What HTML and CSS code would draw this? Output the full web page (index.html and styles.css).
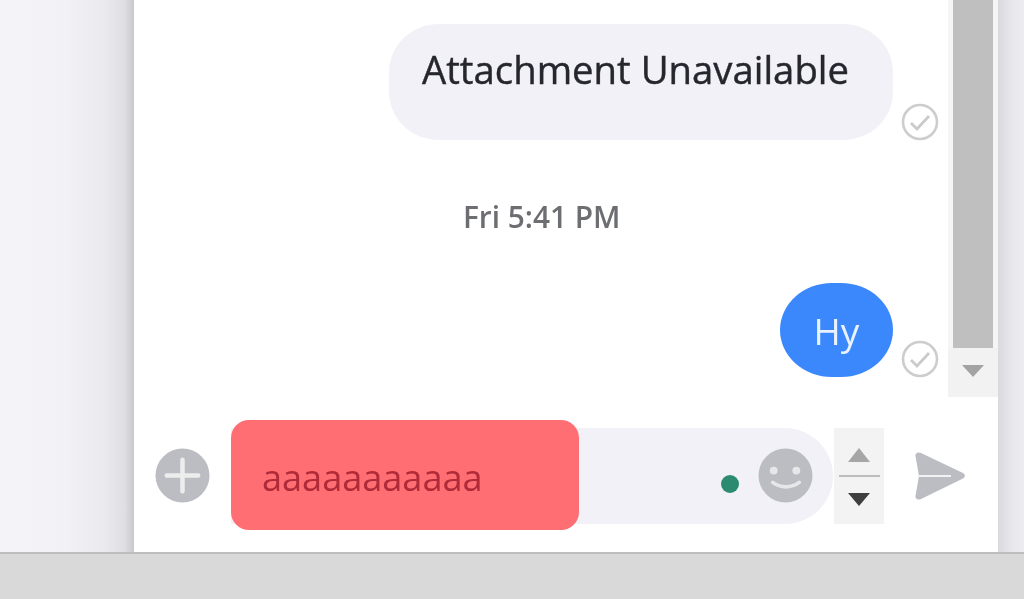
FILE: index.html
```html
<!DOCTYPE html>
<html lang="en">
<head>
<meta charset="utf-8">
<title>Messenger chat</title>
<link rel="stylesheet" href="styles.css">
</head>
<body>
<div class="desktop">
  <div class="side side-left"></div>
  <main class="panel">
    <div class="thread">
      <div class="messages">
        <div class="row">
          <div class="bubble bubble-grey">Attachment Unavailable</div>
          <svg class="tick" viewBox="0 0 38 38"><circle cx="19" cy="19" r="17" fill="none" stroke="#cdcdcd" stroke-width="2.6"/><path d="M10 20l6 6 12-13" fill="none" stroke="#cacaca" stroke-width="2.8"/></svg>
        </div>
        <div class="stamp">Fri 5:41 PM</div>
        <div class="row">
          <div class="bubble bubble-blue">Hy</div>
          <svg class="tick" viewBox="0 0 38 38"><circle cx="19" cy="19" r="17" fill="none" stroke="#cdcdcd" stroke-width="2.6"/><path d="M10 20l6 6 12-13" fill="none" stroke="#cacaca" stroke-width="2.8"/></svg>
        </div>
      </div>
      <div class="scrollbar">
        <div class="thumb"></div>
        <div class="scroll-end"><span class="tri tri-scroll"></span></div>
      </div>
    </div>
    <div class="composer">
      <svg class="plus" viewBox="0 0 56 56"><circle cx="28" cy="28" r="27.5" fill="#bcbdc2"/><path d="M12 28h32M28 12v32" stroke="#eceded" stroke-width="4.6" stroke-linecap="round"/></svg>
      <div class="input">
        <div class="redact">aaaaaaaaaaa</div>
        <span class="dot"></span>
        <svg class="smile" viewBox="0 0 56 56"><circle cx="28" cy="28" r="27.5" fill="#bcbdc2"/><circle cx="16" cy="23" r="4" fill="#e6e7e9"/><circle cx="39" cy="23" r="4" fill="#e6e7e9"/><path d="M15 35c8 6 19 6 27 0" fill="none" stroke="#e6e7e9" stroke-width="3.8" stroke-linecap="round"/></svg>
      </div>
      <div class="spinner">
        <span class="tri tri-up"></span>
        <span class="rule"></span>
        <span class="tri tri-down"></span>
      </div>
      <svg class="send" viewBox="0 0 54 50"><path d="M2.500 5C2 2 5 .5 8 2l42 20c2.500 1.500 2.500 4 0 5.500L8 48c-3 1.500-6 0-5.500-3L6 25z" fill="#bcbdc2"/><path d="M5 25h33" stroke="#f1f2f4" stroke-width="2.200"/></svg>
    </div>
  </main>
  <div class="side side-right"></div>
</div>
<footer class="bar"></footer>
</body>
</html>
```

FILE: styles.css
```css
* { box-sizing: border-box; }
html, body { margin: 0; height: 100%; overflow: hidden; background: #fff; }
body { display: flex; flex-direction: column; width: 1024px; height: 599px; font-family: "Open Sans", "Noto Sans", sans-serif; filter: blur(0.45px); }
.desktop { display: flex; height: 552px; }
.side { flex: none; }
.side-left { width: 134px; background: linear-gradient(90deg, #f3f3f8 0%, #f1f1f6 50%, #e9e9ee 78%, #dfdfe3 93%, #c9c9cc 100%); }
.side-right { width: 26px; background: linear-gradient(90deg, #d9d9de 0%, #e6e6eb 50%, #ededf1 100%); }
.panel { width: 864px; display: flex; flex-direction: column; background: #fff; }
.thread { display: flex; height: 397px; }
.messages { flex: 1; display: flex; flex-direction: column; padding: 24px 9px 0 0; }
.row { display: flex; justify-content: flex-end; align-items: flex-end; gap: 8px; }
.tick { width: 38px; height: 38px; flex: none; margin-bottom: -1px; }
.bubble { font-size: 38.300px; line-height: 48px; }
.bubble-grey { width: 504px; height: 116px; border-radius: 50px / 48px; background: #f1f1f7; color: #26262e; padding: 21px 0 0 33px; white-space: nowrap; -webkit-text-stroke: 0.4px #26262e; }
.bubble-blue { width: 113px; height: 94px; border-radius: 52px / 47px; background: #3b88fd; color: #eaf2ff; text-align: center; font-size: 37px; line-height: 96px; }
.stamp { margin: 56px 0 46px; padding-left: 329px; height: 41px; font-size: 29.800px; line-height: 41px; font-weight: 600; color: #6d6e72; }
.scrollbar { width: 50px; flex: none; display: flex; flex-direction: column; background: #f5f5f5; padding: 0 5px; }
.thumb { flex: 1; background: #bfbfbf; }
.scroll-end { height: 49px; display: flex; align-items: center; justify-content: center; padding-bottom: 4px; margin: 0 -5px; background: #f2f2f2; }
.tri { display: block; width: 0; height: 0; border-left: 11px solid transparent; border-right: 11px solid transparent; }
.tri-scroll { border-top: 12px solid #a3a3a3; }
.composer { flex: 1; display: flex; align-items: center; padding: 2px 0 0 21px; }
.plus { width: 55px; height: 55px; flex: none; }
.input { position: relative; width: 602px; height: 96px; margin-left: 21px; border-radius: 0 48px 48px 0; background: #f1f1f7; display: flex; align-items: center; justify-content: flex-end; padding-right: 20px; }
.redact { position: absolute; left: 0; top: -8px; width: 348px; height: 110px; border-radius: 18px; background: #fe6e72; color: #b02a38; font-size: 36.100px; line-height: 114px; padding-left: 31px; }
.dot { width: 18px; height: 18px; border-radius: 50%; background: #2b8a70; margin: 16px 19px 0 0; }
.smile { width: 55px; height: 55px; flex: none; }
.spinner { width: 50px; height: 96px; flex: none; margin-left: 1px; background: #f3f3f3; display: flex; flex-direction: column; align-items: center; padding-top: 20px; }
.rule { width: 41px; height: 2px; background: #bdbdbd; margin: 13px 0 16px; flex: none; }
.tri-up { border-bottom: 14px solid #a6a6a6; }
.tri-down { border-top: 13px solid #3f3f3f; }
.send { width: 54px; height: 50px; flex: none; margin: 0 0 0 29px; }
.bar { height: 47px; background: #d9d9d9; border-top: 2px solid #bdbdbd; }
```
